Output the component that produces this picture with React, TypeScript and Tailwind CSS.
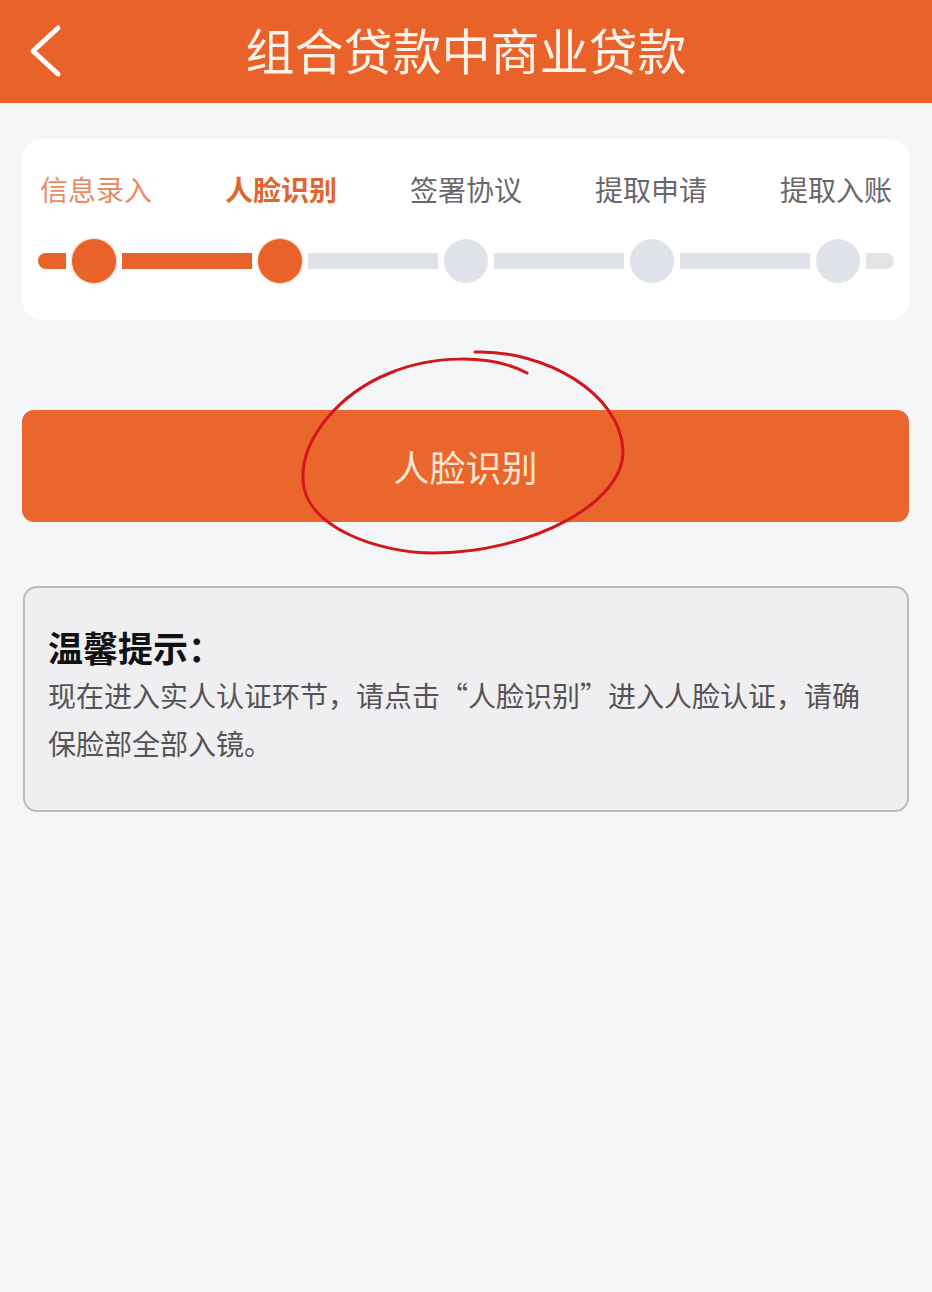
import React from 'react';

const steps = [
  { label: '信息录入', state: 'done' },
  { label: '人脸识别', state: 'active' },
  { label: '签署协议', state: 'todo' },
  { label: '提取申请', state: 'todo' },
  { label: '提取入账', state: 'todo' },
];

const font = { fontFamily: '"Noto Sans CJK SC", "Noto Sans", sans-serif' };

// 手绘红圈
const RedCircle: React.FC = () => (
  <svg
    className="pointer-events-none absolute left-[268px] top-[-72px]"
    width="350"
    height="225"
    viewBox="0 0 350 225"
    fill="none"
  >
    <path
      d="M185 14 C255 12 330 55 333 112 C335 165 240 215 143 215 C90 215 15 190 13 142 C11 100 50 55 100 35 C140 18 200 15 237 35"
      stroke="#d3161e"
      strokeWidth="3"
      strokeLinecap="round"
    />
  </svg>
);

export default function App() {
  return (
    <div className="min-h-[1292px] w-[932px] bg-[#f5f6f8]" style={font}>
      <div className="relative flex h-[103px] items-center justify-center bg-[#e8622a]">
        <svg className="absolute left-[28px] top-[24px]" width="36" height="54" viewBox="0 0 36 54" fill="none">
          <path d="M30 4 L5 27 L30 50" stroke="#fff" strokeWidth="5" strokeLinecap="round" strokeLinejoin="round" />
        </svg>
        <h1 className="pb-[6px] text-[49px] leading-none text-[#fff3ea]">组合贷款中商业贷款</h1>
      </div>

      <div className="mx-[22px] mt-[36px] h-[181px] rounded-[20px] bg-white px-[16px] pt-[30px]">
        <div className="flex justify-between">
          {steps.map((s) => (
            <div
              key={s.label}
              className={`w-[116px] text-center text-[28px] leading-[40px] ${
                s.state === 'done'
                  ? 'text-[#e98c66]'
                  : s.state === 'active'
                  ? 'font-bold text-[#e4642d]'
                  : 'text-[#6a676c]'
              }`}
            >
              {s.label}
            </div>
          ))}
        </div>
        <div className="mt-[30px] flex items-center gap-[6px]">
          <div className="h-[16px] w-[28px] rounded-l-full bg-[#e8622a]" />
          {steps.map((s, i) => (
            <React.Fragment key={s.label}>
              <div
                className={`h-[44px] w-[44px] shrink-0 rounded-full ${
                  s.state === 'todo' ? 'bg-[#dfe2e9]' : 'bg-[#e8622a] shadow-[0_0_3px_#f0a070]'
                }`}
              />
              {i < steps.length - 1 && (
                <div className={`h-[16px] flex-1 ${i === 0 ? 'bg-[#e8622a]' : 'bg-[#dfe2e9]'}`} />
              )}
            </React.Fragment>
          ))}
          <div className="h-[16px] w-[28px] rounded-r-full bg-[#e3e3e6]" />
        </div>
      </div>

      <div className="relative mx-[22px] mt-[90px]">
        <button className="flex h-[112px] w-[887px] items-center justify-center rounded-[12px] bg-[#eb662c] text-[36px] text-[#fde6d2]">
          人脸识别
        </button>
        <RedCircle />
      </div>

      <div className="mx-[23px] mt-[64px] h-[226px] rounded-[14px] border-2 border-[#bcbcc0] bg-[#efeff1] px-[23px] pt-[38px]">
        <div className="text-[35px] font-bold leading-[42px] text-[#111]">温馨提示：</div>
        <p className="mt-[3px] text-[28px] leading-[48px] text-[#555357]">
          现在进入实人认证环节，请点击“人脸识别”进入人脸认证，请确保脸部全部入镜。
        </p>
      </div>
    </div>
  );
}
